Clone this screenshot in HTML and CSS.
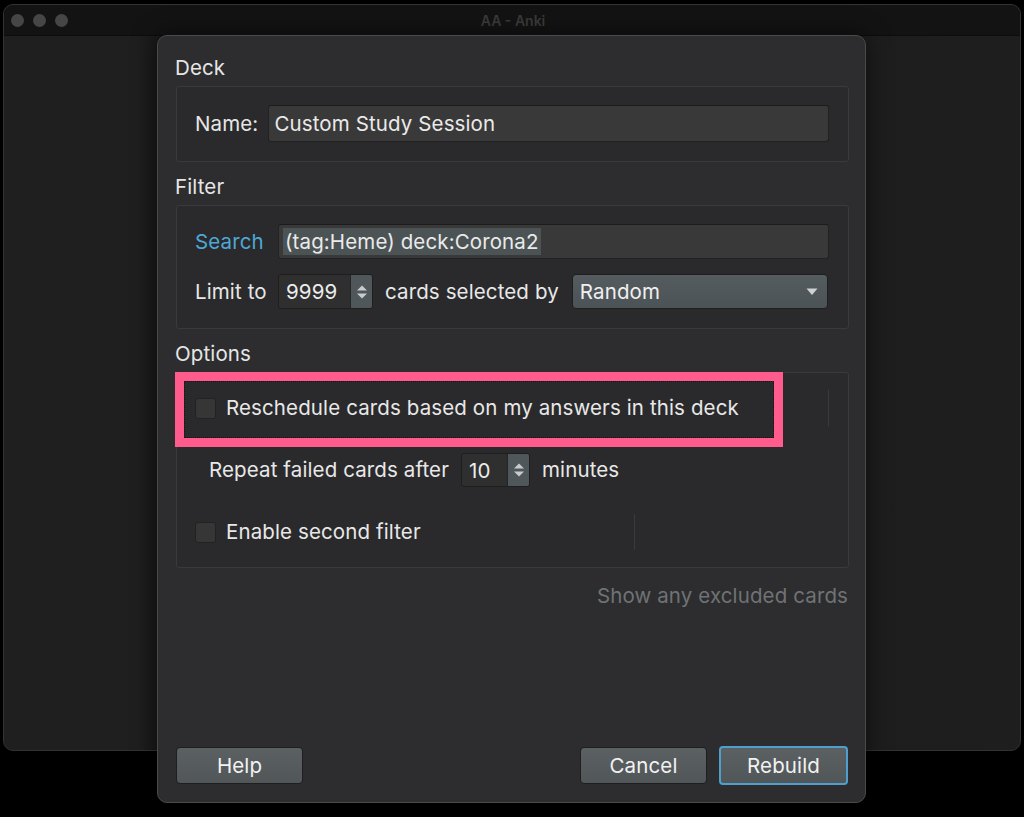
FILE: index.html
```html
<!DOCTYPE html>
<html>
<head>
<meta charset="utf-8">
<link rel="stylesheet" href="styles.css">
</head>
<body>
<div class="screen">
  <div class="window">
    <div class="titlebar">
      <div class="lights"><span class="light"></span><span class="light"></span><span class="light"></span></div>
      <div class="wtitle">AA - Anki</div>
      <div></div>
    </div>
    <div class="wbody"></div>
  </div>

  <div class="dialog">
    <div class="sec-title">Deck</div>
    <div class="group deck-group">
      <span class="lbl">Name:</span>
      <div class="input name-input">Custom Study Session</div>
    </div>

    <div class="sec-title">Filter</div>
    <div class="group filter-group">
      <span class="lbl link">Search</span>
      <div class="input search-input"><span class="sel">(tag:Heme) deck:Corona2</span></div>
      <span class="lbl">Limit to</span>
      <div class="limit-row">
        <div class="spin spin-limit">
          <span class="spin-val">9999</span>
          <span class="spin-btn">
            <svg width="12" height="16" viewBox="0 0 12 16"><path d="M1 6.5 L6 1.5 L11 6.5 Z" fill="#c9cccd"/><path d="M1 9.5 L6 14.5 L11 9.5 Z" fill="#c9cccd"/></svg>
          </span>
        </div>
        <span class="txt">cards selected by</span>
        <div class="combo">
          <span>Random</span>
          <svg width="12" height="8" viewBox="0 0 12 8"><path d="M0.5 0.5 L11.5 0.5 L6 7 Z" fill="#cfd2d3"/></svg>
        </div>
      </div>
    </div>

    <div class="sec-title">Options</div>
    <div class="group options-group">
      <div class="opt-row">
        <span class="check"></span>
        <span class="txt">Reschedule cards based on my answers in this deck</span>
        <span class="vsep vsep-end"></span>
      </div>
      <div class="opt-row indent">
        <span class="txt">Repeat failed cards after</span>
        <div class="spin spin-min">
          <span class="spin-val">10</span>
          <span class="spin-btn">
            <svg width="12" height="16" viewBox="0 0 12 16"><path d="M1 6.5 L6 1.5 L11 6.5 Z" fill="#c9cccd"/><path d="M1 9.5 L6 14.5 L11 9.5 Z" fill="#c9cccd"/></svg>
          </span>
        </div>
        <span class="txt">minutes</span>
      </div>
      <div class="opt-row">
        <span class="check"></span>
        <span class="txt">Enable second filter</span>
        <span class="vsep vsep-mid"></span>
      </div>
    </div>

    <div class="excluded">Show any excluded cards</div>
    <div class="spacer"></div>

    <div class="footer">
      <button class="btn">Help</button>
      <div class="footer-right">
        <button class="btn">Cancel</button>
        <button class="btn btn-default">Rebuild</button>
      </div>
    </div>

    <div class="highlight"></div>
  </div>
</div>
</body>
</html>
```

FILE: styles.css
```css
* { box-sizing: border-box; }

body {
  margin: 0;
  background: #000;
  font-family: Inter, "Noto Sans", "Liberation Sans", sans-serif;
  color: #e8e8e8;
}

.screen {
  position: relative;
  width: 1024px;
  height: 817px;
  overflow: hidden;
  background: #000;
}

/* background main window */
.window {
  margin: 4px 3px 0;
  width: 1018px;
  height: 747px;
  border-radius: 10px;
  border: 1px solid #333;
  background: #1e1e1e;
  overflow: hidden;
  display: flex;
  flex-direction: column;
}

.titlebar {
  height: 31px;
  background: #131313;
  border-bottom: 1px solid #0c0c0c;
  display: grid;
  grid-template-columns: 1fr auto 1fr;
  align-items: center;
}

.lights {
  display: flex;
  gap: 9px;
  padding-left: 7px;
}

.light {
  width: 13px;
  height: 13px;
  border-radius: 50%;
  background: #464646;
}

.wtitle {
  font-size: 14px;
  font-weight: 600;
  color: #3b3b3b;
  padding-left: 2px;
}

.wbody {
  flex: 1;
  background: linear-gradient(90deg, #1f1f1f 0%, #1f1f1f 13%, #1a1a1a 15%, #1e1e1e 100%);
}

/* dialog */
.dialog {
  position: absolute;
  left: 157px;
  top: 35px;
  width: 709px;
  height: 768px;
  border: 1px solid #4a4a4c;
  border-radius: 10px;
  background: #2d2d2f;
  padding: 20px 16px 17px 18px;
  display: flex;
  flex-direction: column;
  box-shadow: 0 0 24px rgba(0, 0, 0, 0.55);
  font-size: 20.5px;
  letter-spacing: 0.12px;
}

.sec-title {
  font-size: 20.5px;
  line-height: 24px;
  margin-left: -1px;
  margin-bottom: 6px;
  color: #e6e6e6;
}

.group + .sec-title { margin-top: 13px; }

.group {
  background: #2a2a2c;
  border: 1px solid #3a3a3c;
  border-radius: 3px;
}

.lbl {
  color: #e6e6e6;
  line-height: 24px;
  white-space: nowrap;
}

.link { color: #4ea8d4; }

.input {
  background: #393939;
  border: 1px solid #222;
  border-top-color: #1c1c1c;
  border-radius: 3px;
  color: #eaeaea;
  display: flex;
  align-items: center;
  padding-left: 5px;
}

.deck-group {
  display: flex;
  align-items: center;
  gap: 10px;
  padding: 18px 19px 19px 18px;
}

.name-input {
  flex: 1;
  height: 37px;
  padding-top: 0;
}

.filter-group {
  display: grid;
  grid-template-columns: 71px 1fr;
  column-gap: 12px;
  row-gap: 15px;
  align-items: center;
  padding: 18px 19px 19px 18px;
}

.search-input {
  height: 35px;
  padding-left: 4px;
}

.sel {
  background: #4b5355;
  padding: 1px 2px;
  line-height: 25px;
}

.limit-row {
  display: flex;
  align-items: center;
  gap: 12px;
}

.txt {
  line-height: 24px;
  color: #e8e8e8;
  white-space: nowrap;
}

.spin {
  display: flex;
  height: 35px;
  background: #2f2f2f;
  border: 1px solid #1e1e1e;
  border-radius: 3px;
  overflow: hidden;
}

.spin-limit { width: 95px; }
.spin-min { width: 69px; height: 34px; }

.spin-val {
  flex: 1;
  display: flex;
  align-items: center;
  padding-left: 7px;
  color: #ececec;
}

.spin-btn {
  width: 22px;
  background: #50575a;
  display: flex;
  align-items: center;
  justify-content: center;
  border-left: 1px solid #252525;
}

.combo {
  flex: 1;
  height: 35px;
  margin-left: 1px;
  margin-right: 1px;
  background: linear-gradient(#555c5f, #4c5356);
  border: 1px solid #1f1f1f;
  border-radius: 4px;
  display: flex;
  align-items: center;
  justify-content: space-between;
  padding: 0 9px 0 7px;
  color: #f0f0f0;
}

.options-group {
  display: flex;
  flex-direction: column;
  gap: 26px;
  padding: 17px 19px 17px 18px;
}

.opt-row {
  height: 36px;
  display: flex;
  align-items: center;
  gap: 10px;
}

.opt-row.indent {
  padding-left: 14px;
  gap: 12px;
}

.check {
  width: 21px;
  height: 21px;
  background: #363636;
  border: 1px solid #222;
  border-radius: 3px;
  flex: none;
}

.vsep {
  width: 1px;
  height: 36px;
  background: #3b3b3d;
}

.vsep-end { margin-left: auto; }
.vsep-mid { margin-left: auto; margin-right: 194px; }

.excluded {
  margin-top: 16px;
  text-align: right;
  padding-right: 1px;
  line-height: 24px;
  color: #6f7375;
}

.spacer { flex: 1; }

.footer {
  display: flex;
  justify-content: space-between;
  align-items: center;
}

.footer-right {
  display: flex;
  align-items: center;
  gap: 12px;
  margin-right: 1px;
}

.btn {
  width: 127px;
  height: 37px;
  font-family: inherit;
  font-size: 20.5px;
  letter-spacing: 0.12px;
  color: #f2f2f2;
  background: linear-gradient(#5b6063, #515659);
  border: 1px solid #1f1f1f;
  border-radius: 4px;
  padding: 1px 0 0 0;
  line-height: 34px;
}

.btn-default {
  width: 129px;
  height: 39px;
  border: 2px solid #4f9fce;
}

/* annotation */
.highlight {
  position: absolute;
  left: 17px;
  top: 336px;
  width: 608px;
  height: 75px;
  border: 9px solid #ff5c8d;
  outline: 1px dotted #151515;
  outline-offset: -10px;
}
```
